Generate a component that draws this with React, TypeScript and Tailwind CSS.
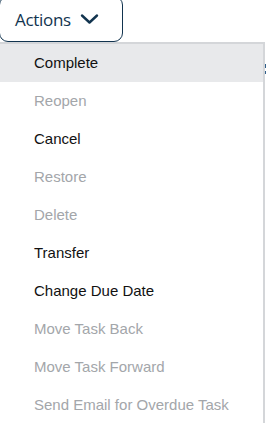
import React from "react";

const items: { label: string; enabled: boolean; active?: boolean }[] = [
  { label: "Complete", enabled: true, active: true },
  { label: "Reopen", enabled: false },
  { label: "Cancel", enabled: true },
  { label: "Restore", enabled: false },
  { label: "Delete", enabled: false },
  { label: "Transfer", enabled: true },
  { label: "Change Due Date", enabled: true },
  { label: "Move Task Back", enabled: false },
  { label: "Move Task Forward", enabled: false },
  { label: "Send Email for Overdue Task", enabled: false },
];

export default function App() {
  return (
    <div className="relative w-[266px] h-[423px] overflow-hidden bg-white">
      <div className="relative -mt-[4px] h-[46px]">
        <button className="ml-[-1px] flex h-[46px] w-[124px] items-center rounded-[9px] border-[1.5px] border-[#12344f] pl-[15px] text-[#12344f] [font-family:'Open_Sans','Noto_Sans',sans-serif]">
          <span className="text-[17px] font-medium leading-none tracking-[-0.3px]">Actions</span>
          <svg className="ml-[9px]" width="19" height="12" viewBox="0 0 19 12" fill="none">
            <path d="M2 2.5 L9.5 9.5 L17 2.5" stroke="#12344f" strokeWidth="2.4" strokeLinecap="round" strokeLinejoin="round" />
          </svg>
        </button>
      </div>
      <div className="absolute left-[265px] top-[64px] h-[4px] w-[1px] bg-[#2f5f8a]" />
      <div className="absolute left-[265px] top-[71px] h-[3px] w-[1px] bg-[#2f5f8a]" />
      <div className="w-[265px] border-t-[2px] border-r-[2px] border-[#d4d6d9] bg-white [font-family:'Liberation_Sans',Arial,sans-serif]">
        {items.map((it) => (
          <div
            key={it.label}
            className={`flex h-[38px] items-center pl-[34px] text-[15px] ${
              it.active ? "bg-[#e8e9eb]" : ""
            } ${it.enabled ? "text-[#111111]" : "text-[#a3a6aa]"}`}
          >
            {it.label}
          </div>
        ))}
      </div>
    </div>
  );
}
